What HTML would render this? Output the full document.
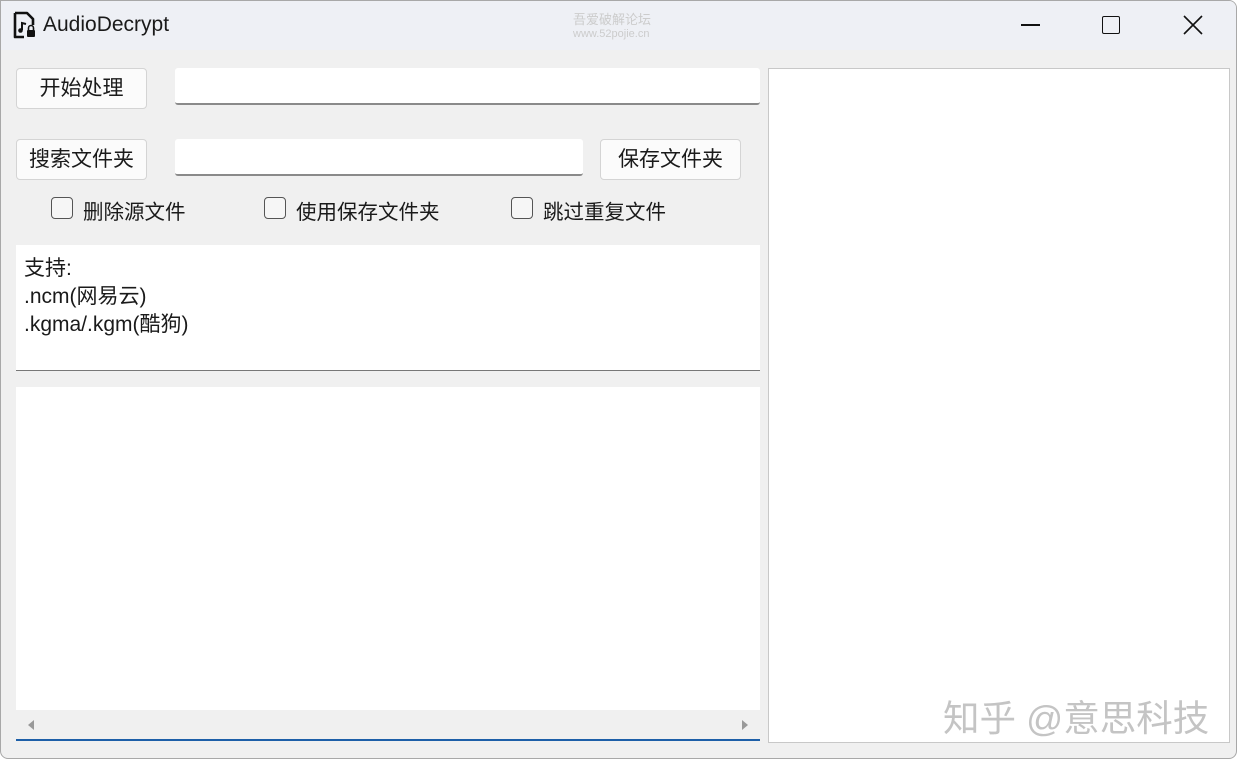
<!DOCTYPE html>
<html><head><meta charset="utf-8"><style>
*{box-sizing:border-box;margin:0;padding:0}
body{width:1242px;height:761px;background:#fff;position:relative;overflow:hidden;font-family:"Liberation Sans","Noto Sans CJK SC",sans-serif;color:#1a1a1a}
.win{position:absolute;left:0;top:0;width:1237px;height:759px;background:#f0f0f0;border:1px solid #a8a8a8;border-radius:0 8px 8px 8px;overflow:hidden}
.title{position:absolute;left:0;top:0;width:100%;height:49px;background:#eef0f5}
.abs{position:absolute}
.btn{position:absolute;background:#fbfbfb;border:1px solid #d4d4d4;border-radius:4px;font-size:21px;text-align:center;color:#1a1a1a}
.inp{position:absolute;background:#fff;border-bottom:2px solid #8a8a8a;border-radius:3px}
.cb{position:absolute;width:22px;height:22px;border:1.5px solid #555;border-radius:4px;background:#f6f6f6}
.lbl{position:absolute;font-size:20.5px}
</style></head><body>
<div class="win">
<div class="title">
<svg class="abs" style="left:11px;top:10px" width="26" height="28" viewBox="0 0 26 28"><path d="M3 2h12l6 6v6M3 2v24h9" fill="none" stroke="#111" stroke-width="2.6" stroke-linejoin="round"/><path d="M10 19v-7l4 1" fill="none" stroke="#111" stroke-width="2"/><circle cx="8.5" cy="19.5" r="2.3" fill="#111"/><rect x="15" y="19" width="8" height="7" rx="1" fill="#111"/><path d="M16.5 19v-2a2.5 2.5 0 0 1 5 0v2" fill="none" stroke="#111" stroke-width="1.6"/></svg>
<div class="abs" style="left:42px;top:12px;font-size:21px">AudioDecrypt</div>
<div class="abs" style="left:572px;top:8px;font-size:13px;color:#ccc">吾爱破解论坛</div>
<div class="abs" style="left:572px;top:27px;font-size:11px;color:#ccc">www.52pojie.cn</div>
<div class="abs" style="left:1020px;top:23px;width:19px;height:1.5px;background:#111"></div>
<div class="abs" style="left:1101px;top:15px;width:18px;height:18px;border:1.5px solid #111;border-radius:2px"></div>
<svg class="abs" style="left:1182px;top:14px" width="20" height="20"><path d="M1 1L19 19M19 1L1 19" stroke="#111" stroke-width="1.6"/></svg>
</div>
<div class="btn" style="left:15px;top:67px;width:131px;height:41px;line-height:39px">开始处理</div>
<div class="inp" style="left:174px;top:67px;width:585px;height:37px"></div>
<div class="btn" style="left:15px;top:138px;width:131px;height:41px;line-height:39px">搜索文件夹</div>
<div class="inp" style="left:174px;top:138px;width:408px;height:37px"></div>
<div class="btn" style="left:599px;top:138px;width:141px;height:41px;line-height:39px">保存文件夹</div>
<div class="cb" style="left:50px;top:196px"></div><div class="lbl" style="left:82px;top:194px">删除源文件</div>
<div class="cb" style="left:263px;top:196px"></div><div class="lbl" style="left:295px;top:194px">使用保存文件夹</div>
<div class="cb" style="left:510px;top:196px"></div><div class="lbl" style="left:542px;top:194px">跳过重复文件</div>
<div class="abs" style="left:15px;top:244px;width:744px;height:126px;background:#fff;border-bottom:1px solid #777;font-size:21px;line-height:28px;padding:10px 8px">支持:<br>.ncm(网易云)<br>.kgma/.kgm(酷狗)</div>
<div class="abs" style="left:15px;top:386px;width:744px;height:354px;background:#fff;border-bottom:2px solid #1d5fa8">
<div class="abs" style="left:0;bottom:0;width:100%;height:29px;background:#f0f0f0"></div>
<div class="abs" style="left:12px;bottom:9px;width:0;height:0;border-top:5px solid transparent;border-bottom:5px solid transparent;border-right:6px solid #999"></div>
<div class="abs" style="right:12px;bottom:9px;width:0;height:0;border-top:5px solid transparent;border-bottom:5px solid transparent;border-left:6px solid #999"></div>
</div>
<div class="abs" style="left:767px;top:67px;width:462px;height:675px;background:#fff;border:1px solid #c8c8c8"></div>
<div class="abs" style="left:942px;top:688px;font-size:36.5px;color:#c4c4c4">知乎 @意思科技</div>
</div>
</body></html>
